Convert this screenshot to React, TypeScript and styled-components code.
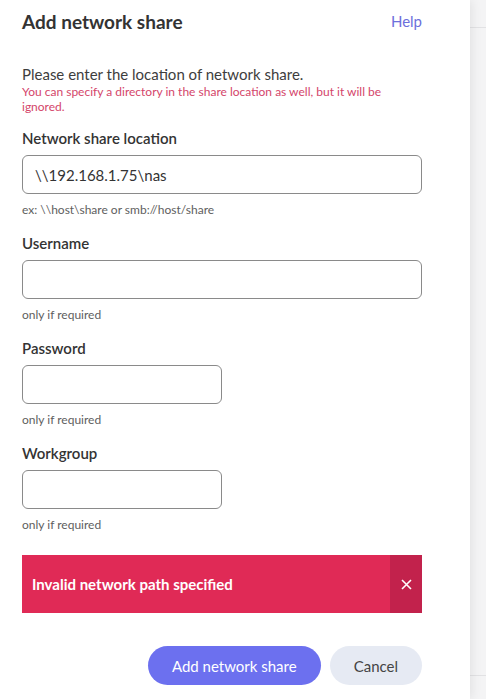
import styled, { createGlobalStyle } from "styled-components";

const GlobalStyle = createGlobalStyle`
  html, body {
    margin: 0;
    padding: 0;
    background: #f4f4f5;
    font-family: Lato, "Noto Sans", sans-serif;
  }
  * { box-sizing: border-box; }
`;

const Page = styled.div`
  display: flex;
  width: 486px;
  height: 699px;
  overflow: hidden;
`;

const Panel = styled.div`
  width: 470px;
  flex-shrink: 0;
  background: #fff;
  padding: 0 48px 0 22px;
  box-shadow: 2px 0 10px rgba(0, 0, 0, 0.08);
  position: relative;
  z-index: 1;
`;

const Backdrop = styled.div`
  flex: 1;
  display: flex;
  flex-direction: column;
  padding-top: 27px;
  & .line {
    border-top: 1px solid #e2e2e4;
  }
  & .spacer {
    flex: 1;
  }
  & .line.bottom {
    margin-bottom: 23px;
  }
`;

const Header = styled.div`
  display: flex;
  justify-content: space-between;
  align-items: center;
  height: 42px;
`;

const Title = styled.h2`
  margin: 0;
  font-size: 19px;
  font-weight: 700;
  color: #333;
`;

const HelpLink = styled.a`
  font-size: 15px;
  color: #6c6fdc;
  text-decoration: none;
  cursor: pointer;
`;

const Intro = styled.p`
  margin: 22px 0 0;
  font-size: 15px;
  line-height: 20px;
  color: #3d3d3d;
`;

const Note = styled.p`
  margin: 0 0 14px;
  font-size: 12px;
  line-height: 15px;
  color: #d4456a;
`;

const Field = styled.div`
  margin-bottom: 15px;
`;

const Label = styled.label`
  display: block;
  font-size: 15px;
  line-height: 20px;
  font-weight: 600;
  color: #333;
  margin-bottom: 7px;
`;

const Input = styled.input<{ $short?: boolean }>`
  display: block;
  width: ${(p) => (p.$short ? "200px" : "400px")};
  height: 39px;
  border: 1px solid #8a8a8a;
  border-radius: 6px;
  padding: 0 12px;
  font-family: inherit;
  font-size: 15px;
  color: #333;
  outline: none;
`;

const Hint = styled.div`
  margin-top: 8px;
  font-size: 12px;
  line-height: 16px;
  color: #5e5e5e;
`;

const Alert = styled.div`
  display: flex;
  width: 400px;
  height: 58px;
  margin-top: 22px;
  background: #e02a56;
  color: #fff;
`;

const AlertText = styled.div`
  flex: 1;
  display: flex;
  align-items: center;
  padding-left: 10px;
  font-size: 15px;
  font-weight: 700;
`;

const AlertClose = styled.button`
  width: 32px;
  border: none;
  background: #c2224c;
  color: #fff;
  display: flex;
  align-items: center;
  justify-content: center;
  padding: 0;
  cursor: pointer;
`;

const Actions = styled.div`
  display: flex;
  justify-content: flex-end;
  gap: 9px;
  width: 400px;
  margin-top: 33px;
`;

const Button = styled.button<{ $primary?: boolean }>`
  height: 39px;
  border: none;
  border-radius: 20px;
  padding: 0 24px;
  font-family: inherit;
  font-size: 15px;
  background: ${(p) => (p.$primary ? "#6c70ef" : "#e6eaf3")};
  color: ${(p) => (p.$primary ? "#fff" : "#444")};
  cursor: pointer;
`;

export default function App() {
  return (
    <>
      <GlobalStyle />
      <Page>
        <Panel>
          <Header>
            <Title>Add network share</Title>
            <HelpLink>Help</HelpLink>
          </Header>
          <Intro>Please enter the location of network share.</Intro>
          <Note>
            You can specify a directory in the share location as well, but it will be ignored.
          </Note>

          <Field>
            <Label>Network share location</Label>
            <Input defaultValue={"\\\\192.168.1.75\\nas"} />
            <Hint>{"ex: \\\\host\\share or smb://host/share"}</Hint>
          </Field>
          <Field>
            <Label>Username</Label>
            <Input />
            <Hint>only if required</Hint>
          </Field>
          <Field>
            <Label>Password</Label>
            <Input $short type="password" />
            <Hint>only if required</Hint>
          </Field>
          <Field>
            <Label>Workgroup</Label>
            <Input $short />
            <Hint>only if required</Hint>
          </Field>

          <Alert>
            <AlertText>Invalid network path specified</AlertText>
            <AlertClose aria-label="Close">
              <svg width="11" height="11" viewBox="0 0 11 11">
                <path d="M1 1L10 10M10 1L1 10" stroke="#fff" strokeWidth="1.6" />
              </svg>
            </AlertClose>
          </Alert>

          <Actions>
            <Button $primary>Add network share</Button>
            <Button>Cancel</Button>
          </Actions>
        </Panel>
        <Backdrop>
          <div className="line" />
          <div className="spacer" />
          <div className="line bottom" />
        </Backdrop>
      </Page>
    </>
  );
}
